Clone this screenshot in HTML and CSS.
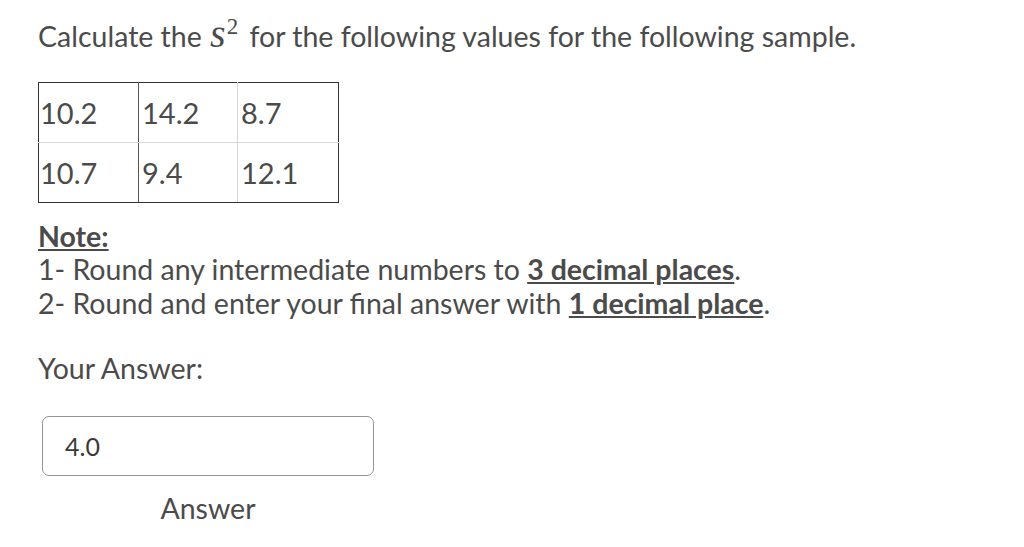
FILE: index.html
```html
<!DOCTYPE html>
<html>
<head>
<meta charset="utf-8">
<link rel="stylesheet" href="styles.css">
</head>
<body>
<div class="page">
  <p class="question">Calculate the <span class="math"><i>s</i><sup>2</sup></span> for the following values for the following sample.</p>
  <table class="data">
    <tr><td class="c1">10.2</td><td class="c2">14.2</td><td class="c3">8.7</td></tr>
    <tr><td class="c1">10.7</td><td class="c2">9.4</td><td class="c3">12.1</td></tr>
  </table>
  <div class="note">
    <div class="note-title">Note:</div>
    <div>1- Round any intermediate numbers to <b class="u">3 decimal places</b>.</div>
    <div>2- Round and enter your final answer with <b class="u">1 decimal place</b>.</div>
  </div>
  <div class="your">Your Answer:</div>
  <div class="answer-wrap">
    <div class="input">4.0</div>
    <div class="answer-label">Answer</div>
  </div>
</div>
</body>
</html>
```
FILE: styles.css
```css
html, body {
  margin: 0;
  padding: 0;
  background: #fff;
}
body {
  font-family: Lato, "Open Sans", sans-serif;
  color: #4b4b4b;
}
.page {
  padding: 16px 0 0 38px;
}
.question {
  margin: 0;
  font-size: 28.5px;
  line-height: 40px;
}
.math {
  font-family: "Liberation Serif", serif;
  font-size: 40px;
  line-height: 0;
  margin-left: 1px;
  margin-right: 4px;
}
.math i {
  font-style: italic;
}
.math sup {
  font-size: 23px;
  line-height: 0;
  margin-left: 1px;
  vertical-align: 13px;
}
.data {
  border-collapse: collapse;
  margin-top: 26px;
  font-size: 29px;
}
.data td {
  height: 60px;
  padding: 0 0 0 3px;
  border: 1px solid #d8d8d8;
  box-sizing: border-box;
}
.data tr:first-child td { border-top: 1.5px solid #333; }
.data tr:last-child td { border-bottom: 1.5px solid #333; }
.data td.c1 { width: 100px; padding-left: 1px; border-left: 1.5px solid #333; border-right: 1.5px solid #555; }
.data td.c2 { width: 99px; }
.data td.c3 { width: 101px; border-right: 1.5px solid #333; }
.note {
  margin-top: 17px;
  font-size: 28.5px;
  line-height: 34px;
}
.note-title {
  font-weight: bold;
  text-decoration: underline;
  line-height: 32px;
}
.u {
  text-decoration: underline;
}
.your {
  margin-top: 31px;
  font-size: 28.5px;
  line-height: 34px;
}
.answer-wrap {
  margin-top: 31px;
  margin-left: 4px;
  width: 332px;
}
.input {
  box-sizing: border-box;
  height: 60px;
  border: 1px solid #959595;
  border-radius: 7px;
  padding: 0 0 0 22px;
  font-size: 25px;
  line-height: 58px;
  color: #3a3a3a;
}
.answer-label {
  text-align: center;
  font-size: 28.5px;
  margin-top: 17px;
  line-height: 30px;
}
```
